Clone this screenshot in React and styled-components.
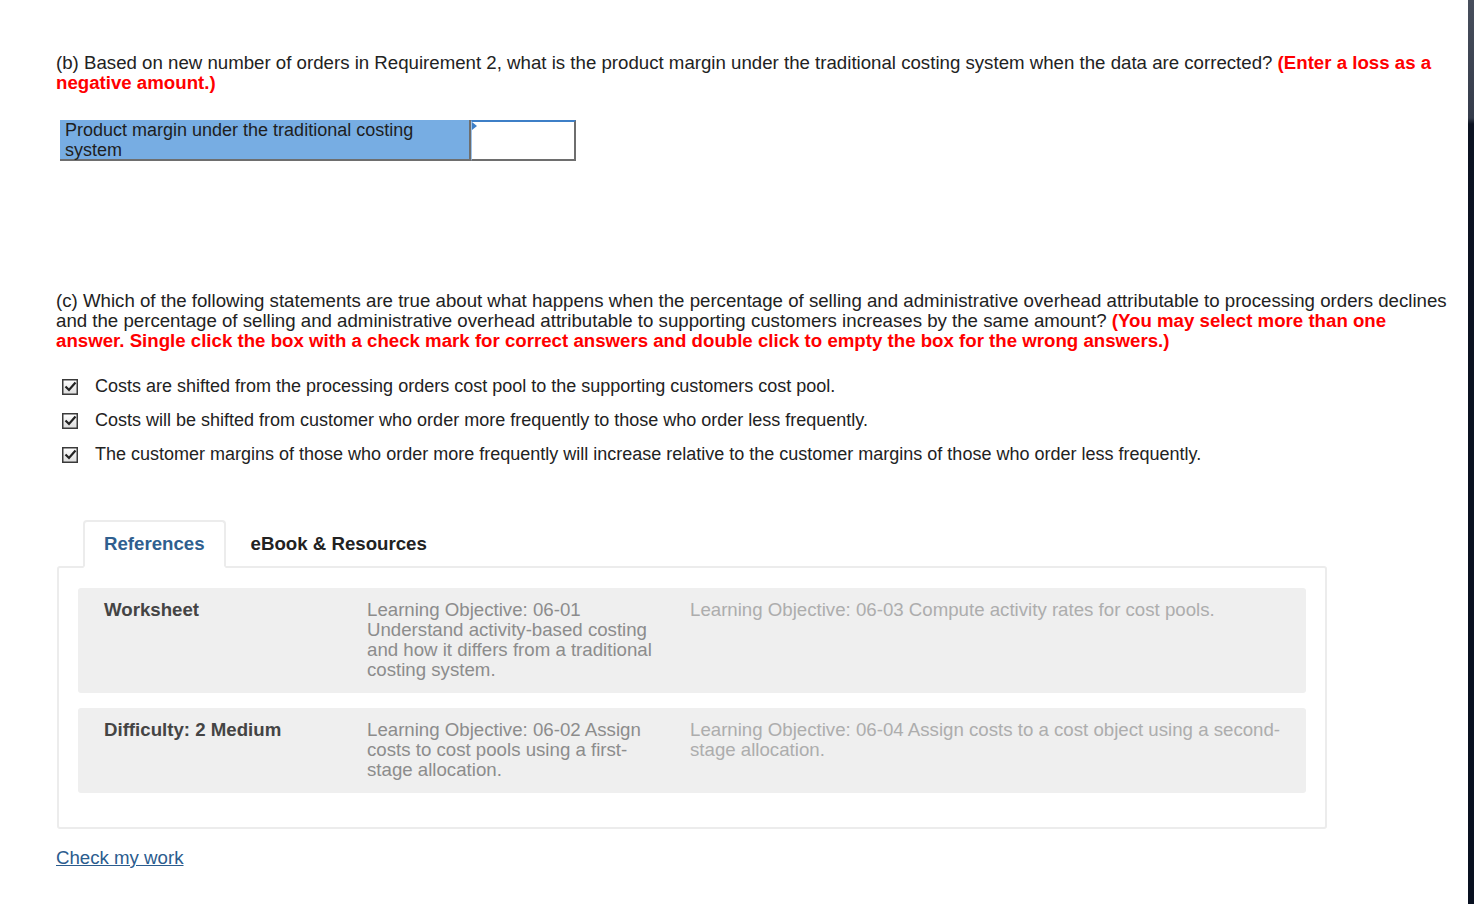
import React from "react";
import styled, { createGlobalStyle } from "styled-components";

const Global = createGlobalStyle`
  html, body { margin: 0; padding: 0; background: #fff; }
  body { font-family: "Liberation Sans", Arial, Helvetica, sans-serif; color: #222; }
`;

const Page = styled.div`
  display: flex;
  min-height: 904px;
`;

const Main = styled.main`
  width: 1468px;
  box-sizing: border-box;
  padding: 53px 13px 0 56px;
  font-size: 18.67px;
  line-height: 20px;
`;

const Strip = styled.div`
  width: 6px;
  flex: none;
  background: linear-gradient(#474e5c 0px, #353c4b 118px, #0c1322 124px, #081020 100%);
`;

const Para = styled.p`
  margin: 0;
`;

const Hint = styled.strong`
  color: #ff0000;
  font-weight: bold;
`;

const AnswerTable = styled.div`
  display: flex;
  margin: 27px 0 130px 4px;
  width: 516px;
  font-size: 18px;
`;

const LabelCell = styled.div`
  width: 411px;
  height: 41px;
  box-sizing: border-box;
  background: #77ade3;
  border-bottom: 2px solid #6e6e6e;
  border-right: 2px solid #6e6e6e;
  padding: 0 5px;
  color: #1e1e1e;
`;

const InputCell = styled.div`
  position: relative;
  width: 105px;
  height: 41px;
  box-sizing: border-box;
  background: #fff;
  border-top: 2px solid #3d7fc7;
  border-right: 2px solid #6e6e6e;
  border-bottom: 2px solid #6e6e6e;
  border-left: 1px solid #9ec4ec;

  &::before {
    content: "";
    position: absolute;
    left: 0;
    top: 0;
    border-left: 5px solid #3d7fc7;
    border-top: 4px solid transparent;
    border-bottom: 4px solid transparent;
  }
`;

const Options = styled.ul`
  list-style: none;
  margin: 18px 0 49px;
  padding: 0;
  font-size: 18px;
`;

const Option = styled.li`
  display: flex;
  align-items: center;
  height: 34px;
  color: #222;
`;

const Box = styled.span`
  width: 16px;
  height: 16px;
  margin: 2px 17px 0 6px;
  flex: none;
  display: flex;
`;

const Tabs = styled.div`
  display: flex;
  gap: 4px;
  padding-left: 27px;
  position: relative;
  z-index: 1;
  margin-bottom: -2px;
`;

const Tab = styled.div`
  height: 48px;
  box-sizing: border-box;
  padding: 0 19px 1px;
  display: flex;
  align-items: center;
  font-weight: bold;
  color: ${(p) => (p.$active ? "#2f5f8f" : "#222")};
  border: 2px solid ${(p) => (p.$active ? "#ececec" : "transparent")};
  border-bottom-color: ${(p) => (p.$active ? "#fff" : "transparent")};
  border-radius: 4px 4px 0 0;
  background: ${(p) => (p.$active ? "#fff" : "transparent")};
`;

const Panel = styled.div`
  width: 1270px;
  margin-left: 1px;
  box-sizing: border-box;
  border: 2px solid #ececec;
  border-radius: 3px;
  padding: 20px 19px 19px;
`;

const Row = styled.div`
  display: grid;
  grid-template-columns: 263px 323px 1fr;
  background: #efefef;
  border-radius: 3px;
  padding: 12px 18px 13px 26px;
  margin-bottom: 15px;
`;

const Title = styled.div`
  font-weight: bold;
  color: #444;
`;

const Objective = styled.div`
  color: ${(p) => p.$c};
  padding-right: ${(p) => p.$pr || 0}px;
`;

const CheckLink = styled.a`
  display: inline-block;
  margin-top: 19px;
  color: #2b5c8e;
  text-decoration: underline;
  cursor: pointer;
`;

const CheckIcon = () => (
  <svg width="16" height="16" viewBox="0 0 16 16">
    <defs>
      <linearGradient id="cbg" x1="0" y1="0" x2="0" y2="1">
        <stop offset="0" stopColor="#ffffff" />
        <stop offset="1" stopColor="#dcdcdc" />
      </linearGradient>
    </defs>
    <rect x="0.75" y="0.75" width="14.5" height="14.5" fill="url(#cbg)" stroke="#3a3a3a" strokeWidth="1.5" />
    <path d="M3.5 7.5 L7 11 L13.5 3.5" fill="none" stroke="#222" strokeWidth="2.2" />
  </svg>
);

const options = [
  "Costs are shifted from the processing orders cost pool to the supporting customers cost pool.",
  "Costs will be shifted from customer who order more frequently to those who order less frequently.",
  "The customer margins of those who order more frequently will increase relative to the customer margins of those who order less frequently.",
];

export default function App() {
  return (
    <Page>
      <Global />
      <Main>
        <Para>
          (b) Based on new number of orders in Requirement 2, what is the product margin under the traditional costing
          system when the data are corrected? <Hint>(Enter a loss as a negative amount.)</Hint>
        </Para>
        <AnswerTable>
          <LabelCell>Product margin under the traditional costing system</LabelCell>
          <InputCell />
        </AnswerTable>
        <Para>
          (c) Which of the following statements are true about what happens when the percentage of selling and
          administrative overhead attributable to processing orders declines and the percentage of selling and
          administrative overhead attributable to supporting customers increases by the same amount?{" "}
          <Hint>
            (You may select more than one answer. Single click the box with a check mark for correct answers and double
            click to empty the box for the wrong answers.)
          </Hint>
        </Para>
        <Options>
          {options.map((o) => (
            <Option key={o}>
              <Box>
                <CheckIcon />
              </Box>
              {o}
            </Option>
          ))}
        </Options>
        <Tabs>
          <Tab $active>References</Tab>
          <Tab>eBook &amp; Resources</Tab>
        </Tabs>
        <Panel>
          <Row>
            <Title>Worksheet</Title>
            <Objective $c="#8c8c8c" $pr={22}>
              Learning Objective: 06-01 Understand activity-based costing and how it differs from a traditional costing
              system.
            </Objective>
            <Objective $c="#adadad">Learning Objective: 06-03 Compute activity rates for cost pools.</Objective>
          </Row>
          <Row>
            <Title>Difficulty: 2 Medium</Title>
            <Objective $c="#8c8c8c" $pr={22}>
              Learning Objective: 06-02 Assign costs to cost pools using a first-stage allocation.
            </Objective>
            <Objective $c="#adadad">
              Learning Objective: 06-04 Assign costs to a cost object using a second-stage allocation.
            </Objective>
          </Row>
        </Panel>
        <CheckLink>Check my work</CheckLink>
      </Main>
      <Strip />
    </Page>
  );
}
